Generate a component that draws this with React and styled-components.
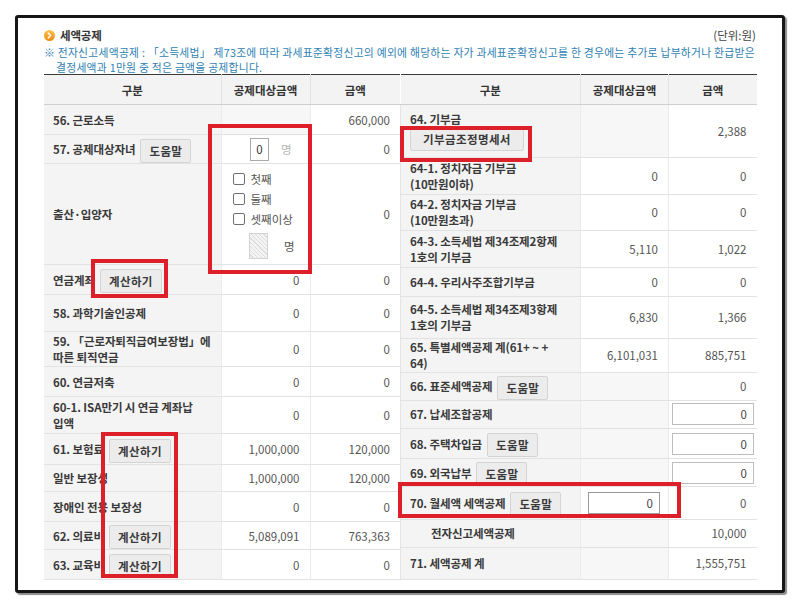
import React from 'react'
import styled, { createGlobalStyle } from 'styled-components'

const GlobalStyle = createGlobalStyle`
  body {
    margin:0;
    background:#fff;
    font-family:"Noto Sans CJK KR", "Noto Sans", sans-serif;
  }
`;

const Page = styled.div`
  position:relative;
  width:800px;
  height:612px;
  padding:15px;
  box-sizing:border-box;
  background:#fff;
`;

const Frame = styled.div`
  height:578px;
  border:3px solid #161616;
  border-radius:3px;
  box-shadow:2px 2px 1px rgba(0,0,0,0.45);
  padding:8px 26px 0 26px;
  box-sizing:border-box;
  background:#fff;
`;

const TitleRow = styled.div`
  display:flex;
  justify-content:space-between;
  align-items:center;
  height:18px;
`;

const Title = styled.h2`
  display:flex;
  align-items:center;
  gap:5px;
  margin:0;
  font-size:11.5px;
  font-weight:700;
  color:#333;
  letter-spacing:-0.2px;
`;

const Unit = styled.span`
  font-size:11.5px;
  color:#444;
`;

const Note = styled.p`
  margin:0;
  height:30px;
  padding-top:1px;
  box-sizing:border-box;
  font-size:10.8px;
  line-height:14.5px;
  color:#2f7fb3;
  white-space:nowrap;
  padding-left:12px;
  text-indent:-12px;
  letter-spacing:0.26px;
`;

const Tables = styled.div`
  display:flex;
`;

const Table = styled.table`
  width:356px;
  border-collapse:collapse;
  table-layout:fixed;
  border-top:1px solid #3a3a3a;
`;

const Col = styled.col`
  width:${p => p.$w}px;
`;

const Tr = styled.tr`
  height:${p => p.$h}px;
`;

const Th = styled.th`
  background:#f3f3f3;
  font-size:11.5px;
  font-weight:700;
  color:#333;
  text-align:center;
  border-bottom:1px solid #cfcfcf;
  border-left:${p => (p.$first ? 'none' : '1px solid #e2e2e2')};
  padding:0;
`;

const Label = styled.td`
  background:#f4f4f4;
  font-size:11.5px;
  font-weight:700;
  color:#3a3a3a;
  line-height:16px;
  white-space:nowrap;
  text-align:left;
  vertical-align:middle;
  padding:0 4px 0 ${p => (p.$indent ? 30 : 9)}px;
  border-bottom:1px solid #e2e2e2;
  border-left:${p => (p.$first ? 'none' : '1px solid #e4e4e4')};
  letter-spacing:-0.1px;
`;

const Cell = styled.td`
  background:${p => (p.$gray ? '#f7f7f7' : '#fff')};
  font-size:11.5px;
  color:#555;
  text-align:right;
  vertical-align:middle;
  padding:0 ${p => (p.$input ? 3 : 10)}px 0 3px;
  border-bottom:1px solid #e2e2e2;
  border-left:1px solid #ebebeb;
`;

const LabelLine = styled.div`
  display:flex;
  align-items:center;
  gap:5px;
`;

const LabelStack = styled.div`
  display:flex;
  flex-direction:column;
  align-items:flex-start;
`;

const Button = styled.button`
  height:24px;
  padding:0 ${p => (p.$wide ? 12 : 8)}px;
  margin-top:${p => (p.$below ? 0 : 3)}px;
  background:#ececec;
  border:1px solid #d4d4d4;
  border-radius:2px;
  font-family:inherit;
  font-size:11.5px;
  font-weight:700;
  color:#3a3a3a;
  letter-spacing:0.4px;
  cursor:pointer;
`;

const Field = styled.input`
  width:${p => p.$w}px;
  height:22px;
  box-sizing:border-box;
  border:1px solid ${p => (p.$dark ? '#999' : '#bdbdbd')};
  background:#fff;
  text-align:right;
  padding:0 6px;
  font-family:inherit;
  font-size:11.5px;
  color:#444;
  outline:none;
`;

const CountRow = styled.div`
  display:flex;
  justify-content:flex-end;
  align-items:center;
  gap:${p => p.$gap}px;
  padding-right:${p => p.$pr}px;
  margin-top:${p => p.$mt || 0}px;
`;

const SmallBox = styled.input`
  width:19px;
  height:${p => p.$h}px;
  box-sizing:border-box;
  border:1px solid ${p => (p.$hatched ? '#d3d3d3' : '#aaa')};
  padding:0 2px;
  text-align:center;
  font-family:inherit;
  font-size:11.5px;
  color:#333;
  background:${p =>
    p.$hatched
      ? 'repeating-linear-gradient(45deg, #f4f4f4 0 2px, #dcdcdc 2px 3px)'
      : '#fff'};
  outline:none;
`;

const Unit2 = styled.span`
  font-size:11.5px;
  color:${p => (p.$muted ? '#b4b4b4' : '#555')};
`;

const ChoiceList = styled.div`
  display:flex;
  flex-direction:column;
  padding-left:8px;
  text-align:left;
`;

const Choice = styled.label`
  display:flex;
  align-items:center;
  gap:6px;
  height:20px;
  font-size:11.5px;
  color:#555;
`;

const Check = styled.input`
  appearance:none;
  width:12px;
  height:12px;
  margin:0;
  border:1px solid #6f6f6f;
  border-radius:2px;
  background:#fff;
`;

const Mark = styled.div`
  position:absolute;
  left:${p => p.$x}px;
  top:${p => p.$y}px;
  width:${p => p.$w}px;
  height:${p => p.$h}px;
  box-sizing:border-box;
  border:4px solid #dc1f28;
  pointer-events:none;
`;

const Bullet = () => (
  <svg width="11" height="11" viewBox="0 0 11 11">
    <defs>
      <linearGradient id="og" x1="0" y1="0" x2="0" y2="1">
        <stop offset="0" stopColor="#ffc24f" />
        <stop offset="1" stopColor="#ec8a0e" />
      </linearGradient>
    </defs>
    <circle cx="5.5" cy="5.5" r="5.5" fill="url(#og)" />
    <path d="M4.4 3.2 L6.6 5.5 L4.4 7.8" stroke="#fff" strokeWidth="1.6" fill="none" strokeLinecap="round" strokeLinejoin="round" />
  </svg>
);

const Lines = ({ text }) =>
  Array.isArray(text) ? (
    <>
      {text[0]}
      <br />
      {text[1]}
    </>
  ) : (
    text
  );

const LabelContent = ({ text, btn }) =>
  btn ? (
    <LabelLine>
      <Lines text={text} />
      <Button>{btn}</Button>
    </LabelLine>
  ) : (
    <Lines text={text} />
  );

const leftRows = [
  { h: 30, label: '56. 근로소득', base: '', gray: true, amt: '660,000' },
  { h: 29, label: '57. 공제대상자녀', btn: '도움말', kind: 'count', amt: '0' },
  { h: 101, label: '출산·입양자', kind: 'choices', amt: '0' },
  { h: 30, label: '연금계좌', btn: '계산하기', base: '0', amt: '0' },
  { h: 37, label: '58. 과학기술인공제', base: '0', amt: '0' },
  { h: 35, label: ['59. 「근로자퇴직급여보장법」에', '따른 퇴직연금'], base: '0', amt: '0' },
  { h: 30, label: '60. 연금저축', base: '0', amt: '0' },
  { h: 37, label: ['60-1. ISA만기 시 연금 계좌납', '입액'], base: '0', amt: '0' },
  { h: 31, label: '61. 보험료', btn: '계산하기', base: '1,000,000', amt: '120,000' },
  { h: 27, label: '일반 보장성', base: '1,000,000', amt: '120,000' },
  { h: 30, label: '장애인 전용 보장성', base: '0', amt: '0' },
  { h: 28, label: '62. 의료비', btn: '계산하기', base: '5,089,091', amt: '763,363' },
  { h: 30, label: '63. 교육비', btn: '계산하기', base: '0', amt: '0' },
];

const rightRows = [
  { h: 36, label: ['64-1. 정치자금 기부금', '(10만원이하)'], base: '0', amt: '0' },
  { h: 36, label: ['64-2. 정치자금 기부금', '(10만원초과)'], base: '0', amt: '0' },
  { h: 37, label: ['64-3. 소득세법 제34조제2항제', '1호의 기부금'], base: '5,110', amt: '1,022' },
  { h: 29, label: '64-4. 우리사주조합기부금', base: '0', amt: '0' },
  { h: 41, label: ['64-5. 소득세법 제34조제3항제', '1호의 기부금'], base: '6,830', amt: '1,366' },
  { h: 34, label: ['65. 특별세액공제 계(61+ ~ +', '64)'], base: '6,101,031', amt: '885,751' },
  { h: 27, label: '66. 표준세액공제', btn: '도움말', gray: true, amt: '0' },
  { h: 28, label: '67. 납세조합공제', gray: true, amtInput: true },
  { h: 30, label: '68. 주택차입금', btn: '도움말', gray: true, amtInput: true },
  { h: 28, label: '69. 외국납부', btn: '도움말', gray: true, amtInput: true },
  { h: 32, label: '70. 월세액 세액공제', btn: '도움말', baseInput: true, amt: '0' },
  { h: 28, label: '전자신고세액공제', indent: true, gray: true, amt: '10,000' },
  { h: 32, label: '71. 세액공제 계', gray: true, amt: '1,555,751' },
];

const CountCell = () => (
  <CountRow $gap={12} $pr={15}>
    <SmallBox $h={23} defaultValue="0" />
    <Unit2 $muted>명</Unit2>
  </CountRow>
);

const ChoiceCell = () => (
  <>
    <ChoiceList>
      <Choice><Check type="checkbox" />첫째</Choice>
      <Choice><Check type="checkbox" />둘째</Choice>
      <Choice><Check type="checkbox" />셋째이상</Choice>
    </ChoiceList>
    <CountRow $gap={16} $pr={12} $mt={4}>
      <SmallBox $h={26} $hatched disabled />
      <Unit2>명</Unit2>
    </CountRow>
  </>
);

const Header = () => (
  <Tr $h={30}>
    <Th $first>구분</Th>
    <Th>공제대상금액</Th>
    <Th>금액</Th>
  </Tr>
);

const App = () => (
  <Page>
    <GlobalStyle />
    <Frame>
      <TitleRow>
        <Title>
          <Bullet />
          세액공제
        </Title>
        <Unit>(단위:원)</Unit>
      </TitleRow>
      <Note>
        ※ 전자신고세액공제 : 「소득세법」 제73조에 따라 과세표준확정신고의 예외에 해당하는 자가 과세표준확정신고를 한 경우에는 추가로 납부하거나 환급받은
        <br />
        결정세액과 1만원 중 적은 금액을 공제합니다.
      </Note>
      <Tables>
        <Table>
          <colgroup>
            <Col $w={177} />
            <Col $w={89} />
            <Col $w={90} />
          </colgroup>
          <tbody>
            <Header />
            {leftRows.map((r, i) => (
              <Tr key={i} $h={r.h}>
                <Label $first>
                  <LabelContent text={r.label} btn={r.btn} />
                </Label>
                <Cell $gray={r.gray} $input={!!r.kind}>
                  {r.kind === 'count' ? <CountCell /> : r.kind === 'choices' ? <ChoiceCell /> : r.base}
                </Cell>
                <Cell>{r.amt}</Cell>
              </Tr>
            ))}
          </tbody>
        </Table>
        <Table>
          <colgroup>
            <Col $w={180} />
            <Col $w={88} />
            <Col $w={88} />
          </colgroup>
          <tbody>
            <Header />
            <Tr $h={53}>
              <Label>
                <LabelStack>
                  64. 기부금
                  <Button $wide $below>기부금조정명세서</Button>
                </LabelStack>
              </Label>
              <Cell $gray />
              <Cell>2,388</Cell>
            </Tr>
            {rightRows.map((r, i) => (
              <Tr key={i} $h={r.h}>
                <Label $indent={r.indent}>
                  <LabelContent text={r.label} btn={r.btn} />
                </Label>
                <Cell $gray={r.gray} $input={r.baseInput}>
                  {r.baseInput ? <Field $w={72} $dark defaultValue="0" style={{ marginRight: 5 }} /> : r.base}
                </Cell>
                <Cell $input={r.amtInput}>
                  {r.amtInput ? <Field $w={82} defaultValue="0" /> : r.amt}
                </Cell>
              </Tr>
            ))}
          </tbody>
        </Table>
      </Tables>
    </Frame>
    <Mark $x={208} $y={124} $w={104} $h={150} />
    <Mark $x={91} $y={259} $w={77} $h={39} />
    <Mark $x={400} $y={126} $w={132} $h={36} />
    <Mark $x={101} $y={432} $w={77} $h={146} />
    <Mark $x={398} $y={482} $w={283} $h={36} />
  </Page>
);

export default App
